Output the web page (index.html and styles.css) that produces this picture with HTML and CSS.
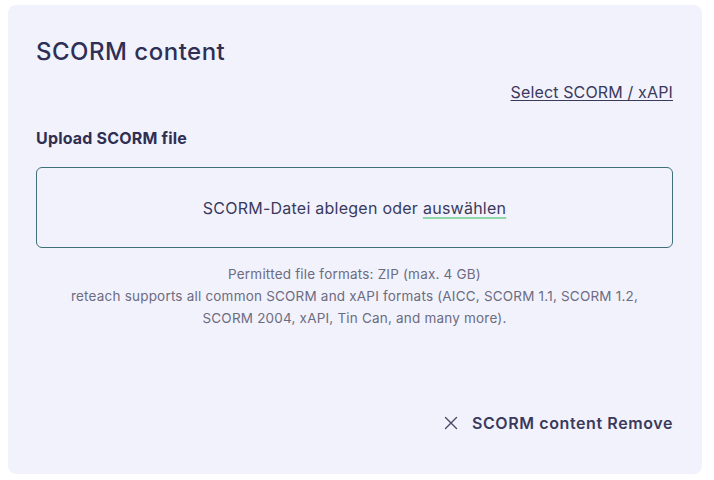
FILE: index.html
```html
<!DOCTYPE html>
<html lang="en">
<head>
<meta charset="utf-8">
<title>SCORM content</title>
<link rel="stylesheet" href="styles.css">
</head>
<body>
<section class="card">
  <h1 class="title">SCORM content</h1>
  <div class="link-row"><a class="select-link" href="#">Select SCORM / xAPI</a></div>
  <div class="label">Upload SCORM file</div>
  <div class="dropzone">SCORM-Datei ablegen oder <span class="choose">auswählen</span></div>
  <p class="help">Permitted file formats: ZIP (max. 4 GB)<br>reteach supports all common SCORM and xAPI formats (AICC, SCORM 1.1, SCORM 1.2,<br>SCORM 2004, xAPI, Tin Can, and many more).</p>
  <div class="remove-row">
    <button class="remove" type="button">
      <svg class="x-icon" width="14" height="14" viewBox="0 0 14 14" aria-hidden="true"><path d="M1.5 1.5 L12.5 12.5 M12.5 1.5 L1.5 12.5" stroke="#4a4a66" stroke-width="1.4" stroke-linecap="round" fill="none"/></svg>
      <span>SCORM content Remove</span>
    </button>
  </div>
</section>
</body>
</html>
```
FILE: styles.css
```css
html, body {
  margin: 0;
  background: #ffffff;
}
body {
  padding: 5px 12px 0 8px;
  font-family: Inter, "Noto Sans", sans-serif;
  color: #2f2f52;
}
.card {
  box-sizing: border-box;
  height: 469px;
  background: #f2f2fd;
  border-radius: 8px;
  padding: 33px 29px 0 28px;
  display: flex;
  flex-direction: column;
}
.title {
  margin: 0;
  font-size: 24px;
  line-height: 28px;
  font-weight: 500;
  letter-spacing: 0.5px;
  color: #2f2f55;
}
.link-row {
  margin-top: 16px;
  text-align: right;
  line-height: 20px;
}
.select-link {
  font-size: 16px;
  letter-spacing: 0.15px;
  color: #3a3a5c;
  text-decoration: underline;
  text-underline-offset: 2px;
  text-decoration-thickness: 1px;
}
.label {
  margin-top: 26px;
  font-size: 16px;
  line-height: 20px;
  font-weight: 700;
  letter-spacing: 0.18px;
  color: #2f2f52;
}
.dropzone {
  margin-top: 19px;
  box-sizing: border-box;
  height: 81px;
  border: 1px solid #3f6f77;
  border-radius: 6px;
  display: flex;
  align-items: center;
  justify-content: center;
  font-size: 16px;
  letter-spacing: 0.25px;
  color: #3a3a5c;
}
.choose {
  margin-left: 0.3em;
  text-decoration: underline;
  text-decoration-color: #8fd6a8;
  text-underline-offset: 3px;
  text-decoration-thickness: 1.5px;
}
.help {
  margin: 15px 0 0;
  text-align: center;
  font-size: 13.5px;
  line-height: 22px;
  letter-spacing: 0.2px;
  color: #6c6c80;
}
.remove-row {
  margin-top: auto;
  margin-bottom: 41px;
  display: flex;
  justify-content: flex-end;
}
.remove {
  display: flex;
  align-items: center;
  gap: 14px;
  padding: 0;
  border: 0;
  background: none;
  font-family: inherit;
  font-size: 16px;
  line-height: 20px;
  font-weight: 600;
  letter-spacing: 0.6px;
  color: #3a3a5c;
  cursor: pointer;
}
```
